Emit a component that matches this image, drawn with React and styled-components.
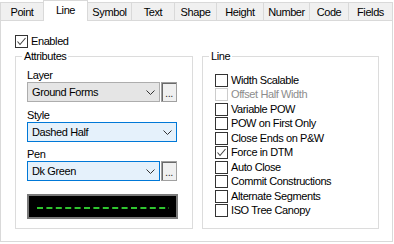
import React from 'react';
import styled, { createGlobalStyle } from 'styled-components';

const GlobalStyle = createGlobalStyle`
  body {
    margin: 0;
    background: #fff;
    font-family: "Liberation Sans", Arial, sans-serif;
    font-size: 11px;
    letter-spacing: -0.4px;
    color: #000;
  }
`;

const tabs = [
    { label: 'Point', width: 44 },
    { label: 'Line', width: 45, active: true },
    { label: 'Symbol', width: 45 },
    { label: 'Text', width: 44 },
    { label: 'Shape', width: 43 },
    { label: 'Height', width: 48 },
    { label: 'Number', width: 47 },
    { label: 'Code', width: 40 },
    { label: 'Fields', width: 45 },
];

const lineOptions = [
    { label: 'Width Scalable' },
    { label: 'Offset Half Width', disabled: true },
    { label: 'Variable POW' },
    { label: 'POW on First Only' },
    { label: 'Close Ends on P&W' },
    { label: 'Force in DTM', checked: true },
    { label: 'Auto Close' },
    { label: 'Commit Constructions' },
    { label: 'Alternate Segments' },
    { label: 'ISO Tree Canopy' },
];

const Chevron = () => (
    <svg width="9" height="5" viewBox="0 0 9 5">
        <polyline points="0.5,0.5 4.5,4.5 8.5,0.5" fill="none" stroke="#333" strokeWidth="1" />
    </svg>
);

const Check = () => (
    <svg width="11" height="11" viewBox="0 0 11 11">
        <polyline points="1.5,5.5 4,8.5 9.5,2" fill="none" stroke="#444" strokeWidth="1.1" />
    </svg>
);

const CheckBox = ({ checked, disabled, children }) => (
    <CheckRow disabled={disabled}>
        <Box disabled={disabled}>{checked && <Check />}</Box>
        <span>{children}</span>
    </CheckRow>
);

const Combo = ({ value, width, focused }) => (
    <Select width={width} focused={focused}>
        <span>{value}</span>
        <Chevron />
    </Select>
);

const App = () => {
    return (<Window>
        <GlobalStyle />
        <TabBar>
            {
                tabs.map(tab => <Tab key={tab.label} width={tab.width} active={tab.active}>{tab.label}</Tab>)
            }
        </TabBar>
        <Panel>
            <CheckBox checked>Enabled</CheckBox>
            <Groups>
                <GroupBox pad="5px 11px 0">
                    <Legend offset={-5}>Attributes</Legend>
                    <Label>Layer</Label>
                    <FieldRow>
                        <Combo value="Ground Forms" width={133} />
                        <MoreButton>...</MoreButton>
                    </FieldRow>
                    <Label gap={6}>Style</Label>
                    <Combo value="Dashed Half" width={150} focused />
                    <Label gap={5}>Pen</Label>
                    <FieldRow>
                        <Combo value="Dk Green" width={133} focused />
                        <MoreButton>...</MoreButton>
                    </FieldRow>
                    <Preview>
                        <svg width="147" height="21" viewBox="0 0 147 21">
                            <line x1="8" y1="12" x2="140" y2="12" stroke="#2fc52f" strokeWidth="2" strokeDasharray="6 3.4" />
                        </svg>
                    </Preview>
                </GroupBox>
                <GroupBox pad="10px 12px 0">
                    <Legend offset={-6}>Line</Legend>
                    <CheckList>
                        {
                            lineOptions.map(opt => <CheckBox key={opt.label} checked={opt.checked} disabled={opt.disabled}>{opt.label}</CheckBox>)
                        }
                    </CheckList>
                </GroupBox>
            </Groups>
        </Panel>
    </Window>);
}

export default App;

const Window = styled.div`
    width: 394px;
    height: 244px;
    background: #fff;
`

const TabBar = styled.div`
    display: flex;
    align-items: flex-end;
    height: 20px;
`

const Tab = styled.div`
    position: relative;
    z-index: ${props => props.active ? 2 : 1};
    box-sizing: border-box;
    width: ${props => props.width}px;
    height: ${props => props.active ? 21 : 18}px;
    margin-left: -1px;
    margin-bottom: ${props => props.active ? -1 : 0}px;
    border: 1px solid #d9d9d9;
    border-bottom: none;
    background: ${props => props.active ? '#fff' : '#f0f0f0'};
    display: flex;
    align-items: center;
    justify-content: center;
    padding: ${props => props.active ? '0 0 2px' : '1px 0 0'};
    &:first-child {
        margin-left: 0;
    }
`

const Panel = styled.div`
    box-sizing: border-box;
    width: 393px;
    height: 222px;
    border: 1px solid #d9d9d9;
    padding: 14px 0 0 14px;
    display: flex;
    flex-direction: column;
`

const CheckRow = styled.label`
    display: flex;
    align-items: center;
    gap: 3px;
    height: 13px;
    line-height: 13px;
    color: ${props => props.disabled ? '#8d8d8d' : '#000'};
    white-space: nowrap;
`

const Box = styled.span`
    box-sizing: border-box;
    width: 13px;
    height: 13px;
    flex: none;
    border: 1px solid ${props => props.disabled ? '#cccccc' : '#333'};
    background: #fff;
    display: flex;
    align-items: center;
    justify-content: center;
`

const Groups = styled.div`
    display: grid;
    grid-template-columns: 178px 177px;
    column-gap: 9px;
    margin-top: 2px;
`

const GroupBox = styled.fieldset`
    box-sizing: border-box;
    margin: 0;
    min-width: 0;
    height: 179px;
    border: 1px solid #dcdcdc;
    padding: ${props => props.pad};
    display: flex;
    flex-direction: column;
    align-items: flex-start;
`

const Legend = styled.legend`
    padding: 0 2px;
    margin-left: ${props => props.offset}px;
    line-height: 13px;
`

const Label = styled.div`
    line-height: 14px;
    margin-top: ${props => props.gap || 0}px;
`

const FieldRow = styled.div`
    display: flex;
    gap: 1px;
`

const Select = styled.div`
    box-sizing: border-box;
    width: ${props => props.width}px;
    height: 20px;
    padding: 0 4px 0 4px;
    border: 1px solid ${props => props.focused ? '#0078d7' : '#adadad'};
    background: ${props => props.focused ? '#e5f1fb' : '#e5e5e5'};
    display: flex;
    align-items: center;
    justify-content: space-between;
    font-size: 11px;
`

const MoreButton = styled.div`
    box-sizing: border-box;
    width: 16px;
    height: 20px;
    border: 1px solid #a0a0a0;
    box-shadow: inset 1px 1px 0 #696969;
    background: #f0f0f0;
    display: flex;
    align-items: flex-end;
    justify-content: center;
    line-height: 13px;
    padding-bottom: 1px;
    color: #333;
`

const Preview = styled.div`
    box-sizing: border-box;
    width: 151px;
    height: 25px;
    margin-top: 13px;
    border: 2px solid #7a7a7a;
    background: #000;
    display: flex;
`

const CheckList = styled.div`
    display: flex;
    flex-direction: column;
    & > label {
        height: 14.5px;
    }
`
